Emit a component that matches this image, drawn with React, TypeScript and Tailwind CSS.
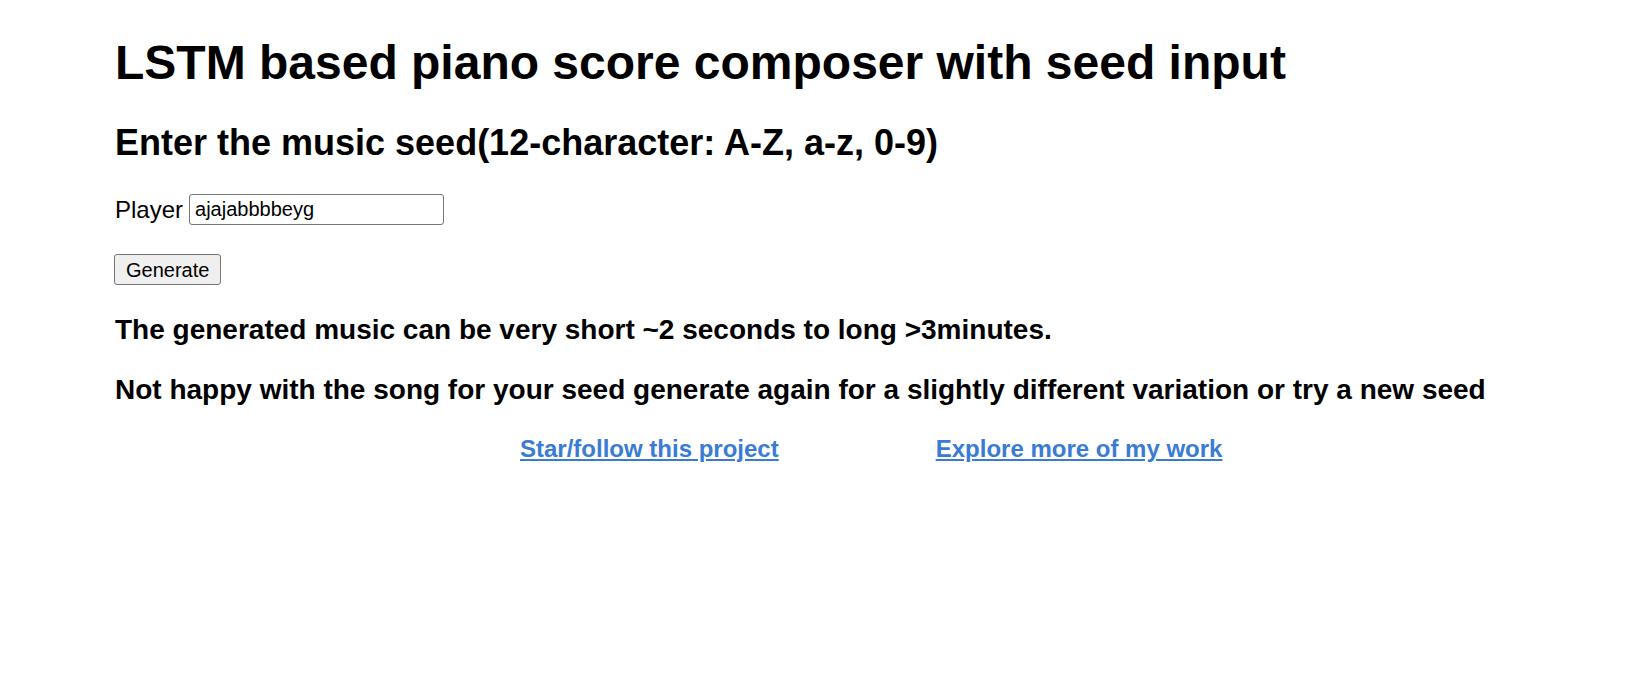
import { useState } from "react";

export default function App() {
  const [seed, setSeed] = useState("ajajabbbbeyg");

  return (
    <div className="min-h-screen bg-white pl-[115px] pt-[39px] text-black font-['Liberation_Sans',Arial,sans-serif]">
      <h1 className="text-[48px] font-bold leading-none">
        LSTM based piano score composer with seed input
      </h1>

      <h2 className="mt-[38px] text-[36px] font-bold leading-none">
        Enter the music seed(12-character: A-Z, a-z, 0-9)
      </h2>

      <div className="mt-[33px] flex h-[31px] items-center gap-[6px]">
        <label htmlFor="seed" className="text-[24px] leading-none">
          Player
        </label>
        <input
          id="seed"
          type="text"
          value={seed}
          onChange={(e) => setSeed(e.target.value)}
          className="h-[31px] w-[255px] rounded-[3px] border border-[#767676] bg-white px-[5px] text-[20px] leading-none outline-none"
        />
      </div>

      <button
        type="button"
        className="-ml-px mt-[29px] h-[31px] rounded-[3px] border border-[#767676] bg-[#efefef] px-[11px] text-[20px] leading-none"
      >
        Generate
      </button>

      <h3 className="mt-[31px] text-[28px] font-bold leading-none">
        The generated music can be very short ~2 seconds to long &gt;3minutes.
      </h3>

      <h3 className="mt-[32px] text-[28px] font-bold leading-none">
        Not happy with the song for your seed generate again for a slightly
        different variation or try a new seed
      </h3>

      <div className="mt-[33px] flex gap-[157px] pl-[405px] text-[24px] font-bold leading-none text-[#3a7bd5]">
        <a href="#" className="underline">
          Star/follow this project
        </a>
        <a href="#" className="underline">
          Explore more of my work
        </a>
      </div>
    </div>
  );
}
